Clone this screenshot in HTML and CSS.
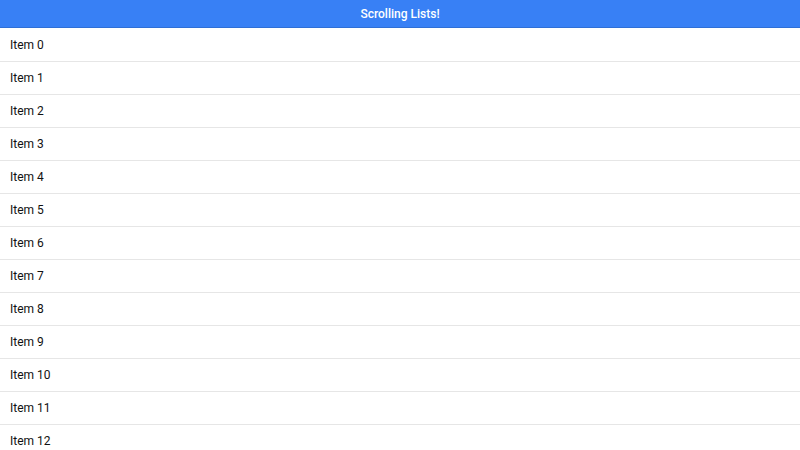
FILE: index.html
```html
<!DOCTYPE html>
<html lang="en">
<head>
    <meta charset="UTF-8">
    <meta name="viewport" content="width=device-width, initial-scale=1.0">
    <title>Scrolling Lists!</title>
    <link rel="stylesheet" href="styles.css">
</head>
<body>
    <header class="toolbar">Scrolling Lists!</header>
    <ul class="list">
        <li>Item 0</li>
        <li>Item 1</li>
        <li>Item 2</li>
        <li>Item 3</li>
        <li>Item 4</li>
        <li>Item 5</li>
        <li>Item 6</li>
        <li>Item 7</li>
        <li>Item 8</li>
        <li>Item 9</li>
        <li>Item 10</li>
        <li>Item 11</li>
        <li>Item 12</li>
        <li>Item 13</li>
    </ul>
</body>
</html>
```

FILE: styles.css
```css
html, body {
    margin: 0;
    padding: 0;
    height: 100%;
    overflow: hidden;
}
body {
    font-family: Roboto, "Liberation Sans", sans-serif;
    color: #111;
    background: #fff;
}
.toolbar {
    height: 27px;
    line-height: 28px;
    background: #3880f5;
    border-bottom: 1px solid #2f6fd6;
    color: #fff;
    text-align: center;
    font-size: 12px;
    font-weight: 500;
}
.list {
    list-style: none;
    margin: 0;
    padding: 1px 0 0;
}
.list li {
    height: 32px;
    line-height: 32px;
    padding: 0 10px;
    font-size: 12px;
    border-bottom: 1px solid #e6e6e6;
}
```
